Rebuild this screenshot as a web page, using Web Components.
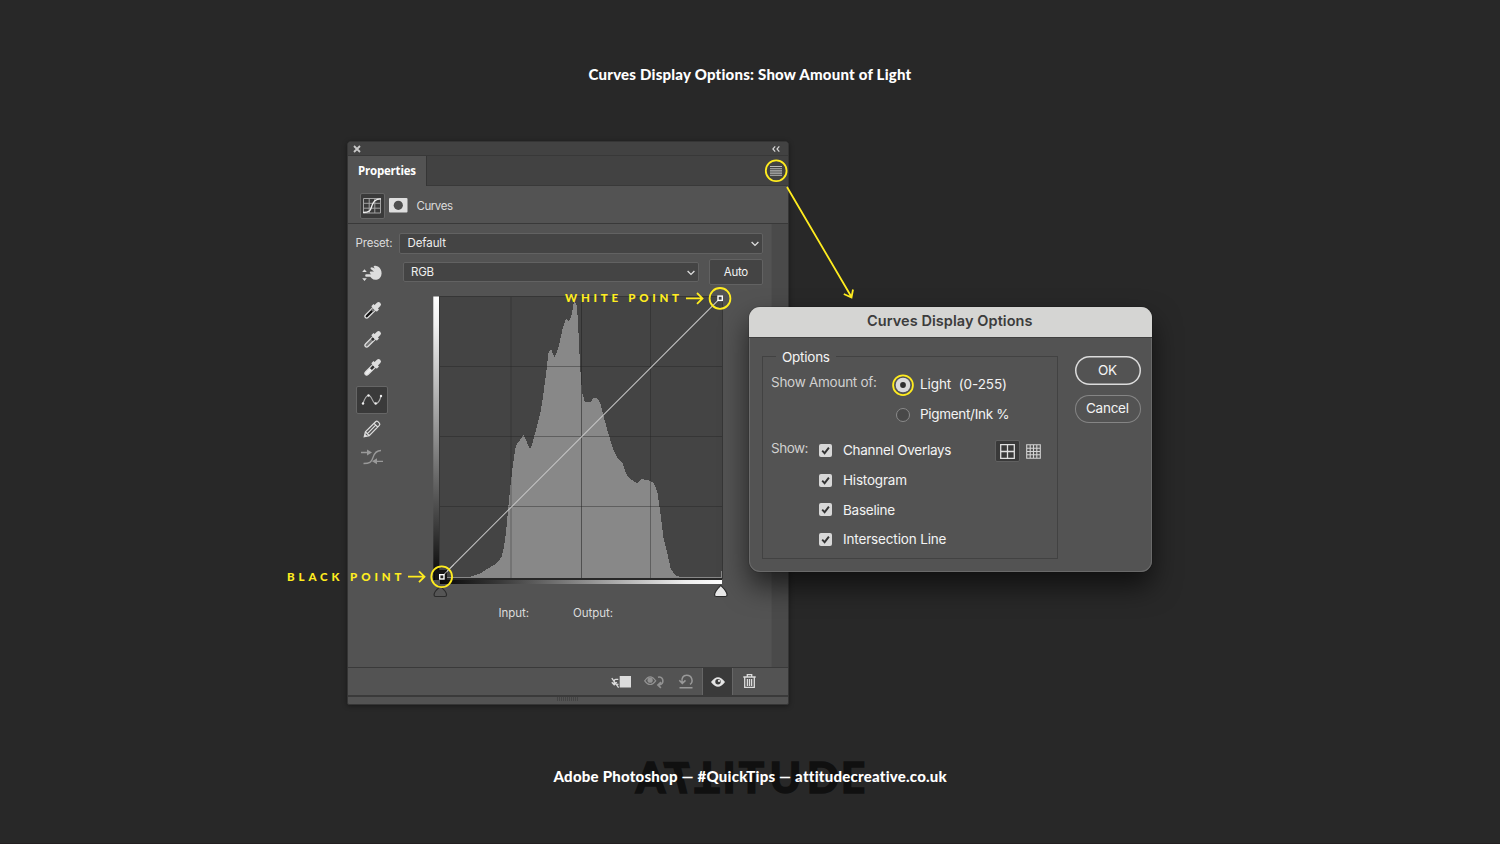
<!DOCTYPE html>
<html lang="en">
<head>
<meta charset="utf-8">
<title>Curves Display Options</title>
<style>
html,body{margin:0;height:100%;background:#282828;overflow:hidden}
</style>
</head>
<body>
<quick-tip></quick-tip>
<script>
function define(name, html, ready) {
  const tpl = document.createElement('template');
  tpl.innerHTML = html;
  customElements.define(name, class extends HTMLElement {
    constructor() {
      super();
      this.attachShadow({ mode: 'open' }).append(tpl.content.cloneNode(true));
    }
    connectedCallback() { if (ready) ready.call(this, this.shadowRoot); }
  });
}

/* Text tracked to a given measure in pixels. */
define('fit-text', `<style>
:host{display:inline-block;white-space:pre;line-height:1.2;flex:none}
span{display:inline-block}
</style><span><slot></slot></span>`, function (root) {
  const s = root.querySelector('span'), w = +this.getAttribute('w');
  const n = this.textContent.length;
  if (n > 1) s.style.letterSpacing = (w - s.getBoundingClientRect().width) / (n - 1) + 'px';
  this.style.width = w + 'px';
});

const icons = {
  curves: ['0 0 18 16', '<path d="M.5.5h17v14.500h-17zM.5 5.300h17M.5 10.200h17M6.200.5v14.500M11.800.5v14.500" fill="none" stroke="#a2a2a2"/><path d="M0 14.500c8 0 7.500-3 9-7S12 .8 18 .8" fill="none" stroke="#eee" stroke-width="1.300"/>'],
  mask: ['0 0 19 15', '<rect width="18.500" height="14.500" rx="1" fill="#dedede"/><circle cx="9.300" cy="7.300" r="4.600" fill="#4e4e4e"/>'],
  hand: ['0 0 20 17', '<path d="M.2 8 2.500 5.300 4.800 8zM.2 14.300l2.300 2.600 2.300-2.600z" fill="#ddd"/><path d="M8.300 7.600 12 7.400 8.700 5Q7.900 3.200 9.800 3.200L13 4.500 11.600 3Q11.700 1.500 13.400 1.800L16 2.600Q19.600 5 19.600 9.400 19.200 14 15.500 15.500 12 16.600 9.600 14.200L8.300 12.700H3.700Q2.600 11.400 3.700 10.200H9.300L7.900 9.300Q7.500 8.200 8.300 7.600z" fill="#ddd"/>'],
  dropBlack: ['0 0 18 18', '<g transform="rotate(45 9 9)"><path d="M7.200 6v10.100q0 2.200 1.800 2.200t1.800-2.200V6z" fill="#111" stroke="#ddd" stroke-width="1.300"/><path d="M7.700 6.500h2.600V9H7.700z" fill="#777"/><path d="M6.600-.4Q6.600-2.600 9-2.600t2.400 2.200V3h1.500v3.100H5.100V3h1.500z" fill="#ddd"/></g>'],
  dropGray: ['0 0 18 18', '<g transform="rotate(45 9 9)"><path d="M7.200 6v10.100q0 2.200 1.800 2.200t1.800-2.200V6z" fill="#777" stroke="#ddd" stroke-width="1.300"/><path d="M7.700 6.500h2.600V9H7.700z" fill="#333"/><path d="M6.600-.4Q6.600-2.600 9-2.600t2.400 2.200V3h1.500v3.100H5.100V3h1.500z" fill="#ddd"/></g>'],
  dropWhite: ['0 0 18 18', '<g transform="rotate(45 9 9)"><path d="M7.200 6v10.100q0 2.200 1.800 2.200t1.800-2.200V6z" fill="#eee" stroke="#ddd" stroke-width="1.300"/><path d="M7.700 6.500h2.600v4H7.700z" fill="#333"/><path d="M6.600-.4Q6.600-2.600 9-2.600t2.400 2.200V3h1.500v3.100H5.100V3h1.500z" fill="#ddd"/></g>'],
  spline: ['0 0 22 14', '<path d="M2 10.500C3.500 6 5 2.500 7.500 2.500c4 0 3.500 8 7.200 8C17.500 10.500 19 7 20 3" fill="none" stroke="#b0b0b0" stroke-width="1.100"/><g fill="#f0f0f0"><circle cx="2" cy="10.500" r="1.200"/><circle cx="7.500" cy="2.500" r="1.200"/><circle cx="14.700" cy="10.500" r="1.200"/><circle cx="20" cy="3" r="1.200"/></g>'],
  pencil: ['0 0 18 18', '<path d="m1.200 16.800 1.200-5L12.600 1.700q1.200-1.100 2.300 0l1.400 1.400q1.100 1.100 0 2.300L6.200 15.600zM11 3.400 14.700 7M2.600 12l3.500 3.500M4.200 13.800l8.500-8.600" fill="none" stroke="#ddd" stroke-width="1.200"/><path d="m1 17 1-3.300 2.300 2.300z" fill="#ddd"/>'],
  smooth: ['0 0 22 16', '<path d="M2.500 14.500c6 0 8-1 9.500-6s3.500-7 8-7M0 3.500h7M14 12.300h8" fill="none" stroke="#999" stroke-width="1.300"/><path d="M6 .5 11 3.500 6 6.500zM16 9.300l-5 3 5 3z" fill="#999"/>'],
  clip: ['0 0 20 14', '<path d="M8.700 1H20v11.500H8.700z" fill="#dcdcdc"/><path d="M7.300 4.300H4.900q-1.700 0-1.700 2v3.400M.8 7.300l2.400 2.600 2.600-2.600M.8 3.200l6.800 9.400" fill="none" stroke="#dcdcdc" stroke-width="1.300"/><path d="M5.500 9.300h2" stroke="#dcdcdc" stroke-width="1.200"/>'],
  previous: ['0 0 21 15', '<path d="M.7 6.800q5.400-8 11 0-5.600 7.400-11 0z" fill="none" stroke="#929292" stroke-width="1.200"/><circle cx="6.100" cy="6.200" r="2.600" fill="#929292"/><path d="M14 3.200c5.500-1.500 7 6.500 1 7.800M17 8.200 13.900 11l3 2.800" fill="none" stroke="#929292" stroke-width="1.600"/>'],
  reset: ['0 0 14 15', '<path d="M3.300 8.700C2 4 4.200 1.300 7.700 1.300c5.500 0 7 6.700 3.300 9M.3 6.300l3 3.100 3.200-3M.5 13.700h13" fill="none" stroke="#999" stroke-width="1.500"/>'],
  eye: ['0 0 14 10', '<path d="M0 5q7-9.600 14 0-7 9.600-14 0z" fill="#e4e4e4"/><circle cx="7" cy="4.800" r="2.700" fill="#3d3d3d"/><circle cx="8" cy="3.900" r="1.100" fill="#e4e4e4"/>'],
  trash: ['0 0 13 15', '<path d="M.3 3h12.400M4.300 2.700V.7h4.400v2M1.700 3.500v9.800h9.600V3.500M4.400 5v7M6.500 5v7M8.600 5v7" fill="none" stroke="#ddd" stroke-width="1.300"/>'],
  menu: ['0 0 12 10', '<path d="M0 .5h12M0 2.700h12M0 4.900h12M0 7.100h12M0 9.300h12" stroke="#b8b8b8" stroke-width="1.100"/>'],
  collapse: ['0 0 8 6', '<path d="M3.200.3.900 3l2.300 2.700M7.300.3 5 3l2.300 2.700" fill="none" stroke="#d5d5d5" stroke-width="1.200"/>'],
  close: ['0 0 8 8', '<path d="m1 1 6 6M7 1 1 7" stroke="#c8c8c8" stroke-width="1.800"/>'],
  chevron: ['0 0 8 6', '<path d="m.6 1 3.400 3.400L7.400 1" fill="none" stroke="#dedede" stroke-width="1.300"/>'],
  grid4: ['0 0 15 15', '<path d="M.7.7h13.600v13.600H.7zM7.500.7v13.600M.7 7.500h13.600" fill="none" stroke="#dfdfdf" stroke-width="1.300"/>'],
  grid10: ['0 0 15 15', '<path d="M.7.7h13.600v13.600H.7zM4.200.7v13.600M7.500.7v13.600M10.800.7v13.600M.7 4.200h13.600M.7 7.500h13.600M.7 10.800h13.600" fill="none" stroke="#d4d4d4" stroke-width="1.100"/>']
};
define('ui-icon', `<style>:host{display:block;flex:none;line-height:0}svg{display:block;overflow:visible}</style><svg></svg>`, function (root) {
  const [box, art] = icons[this.getAttribute('name')], v = box.split(' ');
  const svg = root.querySelector('svg');
  svg.setAttribute('viewBox', box);
  svg.setAttribute('width', v[2]);
  svg.setAttribute('height', v[3]);
  svg.innerHTML = art;
});

define('select-box', `<style>
:host{display:flex;align-items:center;justify-content:space-between;box-sizing:border-box;height:20.500px;padding:0 3px 0 7.500px;background:#444;border:1px solid #626262;border-radius:2px;color:#eee}
ui-icon{margin-top:2px}
</style><slot></slot><ui-icon name="chevron"></ui-icon>`);

define('curve-graph', `<style>:host{display:block}svg{display:block;overflow:visible}</style>
<svg width="300" height="310" viewBox="430 290 300 310">
<defs>
<linearGradient id="v" x1="0" y1="0" x2="0" y2="1"><stop offset="0" stop-color="#fff"/><stop offset=".1" stop-color="#f0f0f0"/><stop offset=".5" stop-color="#8d8d8d"/><stop offset=".8" stop-color="#3e3e3e"/><stop offset="1" stop-color="#060606"/></linearGradient>
<linearGradient id="h"><stop offset="0" stop-color="#060606"/><stop offset=".2" stop-color="#363636"/><stop offset=".5" stop-color="#898989"/><stop offset=".87" stop-color="#eee"/><stop offset="1" stop-color="#fff"/></linearGradient>
</defs>
<rect x="439.500" y="296.500" width="283" height="282" fill="#444" stroke="#363636"/>
<path shape-rendering="crispEdges" fill="#888" d="M441 578V577H470L480 573.500 488.300 568.300 496.700 563.300 501.700 556.700 504 546.700 506 533 508.300 506.700 510.300 486.700 512.700 466.700 515 450 516.700 444 520 440 523.300 434.700 525.300 438 528.300 446 530.300 449 532.300 443.300 536 430 540.700 411.700 543.300 395 546.700 368.300 548.700 351.700 551 349 554.700 357.700 558.700 346.700 562.700 328.300 566 318.300 568.700 321 571.300 316.700 573.300 305 574.700 301 576.700 305 578 321.700 580 365 582 391.700 584.700 401.700 590.700 401.700 593.300 398.300 597.300 398.300 600 402.300 603.300 415 607.300 430 613.300 450 617.300 457.300 622.700 463.300 626.700 475 630.700 479.300 637.300 483.300 641.300 479 650 480.700 654 483.300 657.300 491.700 660 510 663.300 536.700 667.300 553.300 670.700 568.300 675 575 680 577H720.500V571H722V578z"/>
<path d="M511 297V578M650.500 297V578M440 366.500H722M440 436.500H722M440 506.500H722" stroke="#222" stroke-opacity=".4" fill="none"/>
<path d="M581.500 297V578" stroke="#222" stroke-opacity=".55" fill="none"/>
<rect x="433.300" y="296.500" width="5.700" height="283.500" fill="url(#v)"/>
<rect x="440" y="578" width="282" height="2" fill="#282828"/>
<rect x="440" y="580" width="282" height="4" fill="url(#h)"/>
<path d="M441.700 576.700 720 298.300" stroke="#c6c6c6" stroke-width="1.050"/>
<path d="M440.300 586.500c-3 2.500-6.200 5-6.200 8v.5q0 1.500 1.500 1.500h9.400q1.500 0 1.500-1.500v-.5c0-3-3.200-5.500-6.200-8z" fill="#555" stroke="#2b2b2b" stroke-width="1.200"/>
<path d="M720.800 585.300c-3 3-6.200 6.500-6.200 9.200v.5q0 1.500 1.500 1.500h9.400q1.500 0 1.500-1.500v-.5c0-2.700-3.200-6.200-6.200-9.200z" fill="#e8e8e8" stroke="#2b2b2b" stroke-width="1.200"/>
<rect x="435" y="570" width="12" height="10" fill="#151515"/><path d="m444 574.400 10-9.900" stroke="#c6c6c6"/>
<rect x="439.700" y="574.700" width="4.300" height="4.300" fill="#222" stroke="#fff" stroke-width="1.400"/>
<rect x="718" y="296.100" width="4.300" height="4.300" fill="#444" stroke="#fff" stroke-width="1.400"/>
</svg>`);

define('properties-panel', `<style>
:host{display:flex;flex-direction:column;box-sizing:border-box;width:442px;height:564px;background:#535353;border:1px solid #353535;border-radius:4px 4px 2px 2px;overflow:hidden;font:11.500px Inter,sans-serif;color:#dcdcdc;box-shadow:0 1px 5px #0006}
.bar{display:flex;justify-content:space-between;align-items:center;height:13px;padding:0 8px 0 5px;background:#424242;flex:none}
.tabs{display:flex;justify-content:space-between;align-items:center;box-sizing:border-box;height:31px;background:#424242;border-top:1px solid #383838;flex:none;padding-right:5px}
.tab{align-self:stretch;display:flex;align-items:center;padding:0 10px 1px;width:58px;background:#535353;border-right:1px solid #353535;font:700 11.500px "Open Sans",sans-serif;color:#fff}
.rest{flex:1;align-self:stretch;border-bottom:1px solid #393939}
.menu{align-self:stretch;display:flex;align-items:center;border-bottom:1px solid #393939;padding-right:6px;margin-right:-5px}
.kind{display:flex;align-items:center;height:35px;border-bottom:1px solid #393939;padding:2px 0 0 11.500px;flex:none}
.kind fit-text{padding-top:2.500px}
.on{display:flex;align-items:center;justify-content:center;background:#3a3a3a;border:1px solid #666;border-radius:2px;box-sizing:border-box}
.kind .on{width:25px;height:26px}.kind ui-icon[name=mask]{margin:0 8.500px 0 4.500px}
.body{flex:1;display:grid;grid-template-columns:1fr 17px;min-height:0}
.scroll{background:#4a4a4a;border-left:1px solid #4f4f4f}
.main{padding:9px 0 0 7.500px}
.row{display:flex;align-items:center}
.r2{height:27px;margin-top:5px}
.auto{display:flex;align-items:center;justify-content:center;box-sizing:border-box;width:54px;height:26px;margin-left:10px;border:1px solid #626262;border-radius:2px;background:#444;color:#f2f2f2}
.row fit-text{position:relative;top:1px}
.work{display:grid;grid-template-columns:74.500px 300px}
.tools{display:flex;flex-direction:column;align-items:center;width:33px;padding:11.500px 0 0;gap:.700px}
.tools>div{width:32px;height:28px;display:flex;align-items:center;justify-content:center}
.tools .on{height:28px;margin-top:3px}
curve-graph{margin-top:4.500px}
.io{display:flex;gap:44px;padding:7px 0 0 143px}
.foot{display:flex;align-items:center;justify-content:flex-end;height:27px;border-top:1px solid #3a3a3a;border-bottom:2px solid #3a3a3a;flex:none;padding-right:32px}
.foot .on{align-self:stretch;width:31px;border-width:0 1px;border-radius:0;margin:0 10px 0 9px}
.grip{height:7px;flex:none;display:flex;justify-content:center;align-items:flex-start}
.grip i{width:22px;height:4px;background:repeating-linear-gradient(90deg,#444 0 1px,transparent 1px 2px)}
</style>
<div class="bar"><ui-icon name="close"></ui-icon><ui-icon name="collapse"></ui-icon></div>
<div class="tabs"><div class="tab"><fit-text w="58">Properties</fit-text></div><div class="rest"></div><div class="menu"><ui-icon name="menu"></ui-icon></div></div>
<div class="kind"><div class="on"><ui-icon name="curves"></ui-icon></div><ui-icon name="mask"></ui-icon><fit-text w="36.500">Curves</fit-text></div>
<div class="body"><div class="main">
<div class="row"><fit-text w="37">Preset:</fit-text><select-box style="width:363.500px;margin-left:6.500px"><fit-text w="38.500">Default</fit-text></select-box></div>
<div class="row r2"><ui-icon name="hand" style="margin-left:6px"></ui-icon><select-box style="width:296.500px;margin-left:21px"><fit-text w="23">RGB</fit-text></select-box><div class="auto"><fit-text w="24.500">Auto</fit-text></div></div>
<div class="work"><div class="tools">
<div><ui-icon name="dropBlack"></ui-icon></div><div><ui-icon name="dropGray"></ui-icon></div><div><ui-icon name="dropWhite"></ui-icon></div>
<div class="on"><ui-icon name="spline"></ui-icon></div><div><ui-icon name="pencil"></ui-icon></div><div><ui-icon name="smooth"></ui-icon></div></div>
<curve-graph></curve-graph></div>
<div class="io"><fit-text w="30.500">Input:</fit-text><fit-text w="40">Output:</fit-text></div>
</div><div class="scroll"></div></div>
<div class="foot"><ui-icon name="clip"></ui-icon><ui-icon name="previous" style="margin-left:13px"></ui-icon><ui-icon name="reset" style="margin-left:14px"></ui-icon><div class="on"><ui-icon name="eye"></ui-icon></div><ui-icon name="trash"></ui-icon></div>
<div class="grip"><i></i></div>`);

define('check-row', `<style>
:host{display:flex;align-items:center;height:29.700px;color:#f3f3f3}
svg{display:block;margin-right:11.500px}
</style><svg width="13" height="13" viewBox="0 0 13 13"><rect width="13" height="13" rx="2" fill="#d8d8d8"/><path d="m3.200 6.700 2.400 2.500 4.300-5.500" fill="none" stroke="#333" stroke-width="1.900"/></svg><slot></slot>`);

define('radio-row', `<style>
:host{display:flex;align-items:center;height:29.700px;color:#f3f3f3}
svg{display:block;margin:1px 10.500px 0 0;overflow:visible}
.dot{display:none}
:host([checked]) .dot{display:inline}
</style><svg width="14" height="14" viewBox="0 0 14 14"><circle cx="7" cy="7" r="6.500" fill="#484848" stroke="#8a8a8a"/><g class="dot"><circle cx="7" cy="7" r="7.300" fill="#dadada"/><circle cx="7" cy="7" r="2.900" fill="#303030"/></g></svg><slot></slot>`);

define('pill-button', `<style>
:host{display:flex;align-items:center;justify-content:center;box-sizing:border-box;width:66px;height:28.500px;border-radius:15px;box-shadow:inset 0 0 0 1px #858585;color:#f3f3f3;padding-bottom:1px}
:host([primary]){box-shadow:inset 0 0 0 1.500px #dcdcdc}
</style><slot></slot>`);

define('options-dialog', `<style>
:host{display:flex;flex-direction:column;width:402.500px;height:265px;border-radius:11px;background:#535353;overflow:hidden;font:13.500px Inter,sans-serif;color:#d3d3d3;box-shadow:0 0 1px #000,inset 0 0 0 1px #6a6a6a,0 14px 28px #0009}
header{height:30px;display:flex;align-items:center;justify-content:center;background:#d5d5d3;border-bottom:1px solid #3f3f3f;color:#3c3c3c;font-weight:600;font-size:14.500px;flex:none;padding-right:1px}
header fit-text{margin-bottom:1px}
main{display:grid;grid-template-columns:296px 66px;column-gap:17px;padding:11px 0 0 12.500px}
fieldset{margin:0;padding:0;border:1px solid #424242;height:210px;min-width:0;box-sizing:border-box;color:#d0d0d0}
legend{margin-left:13.500px;padding:0 6px;color:#f3f3f3}
.amount,.show{display:flex}
.amount{padding:5px 0 0 8.500px}
.amount>fit-text{margin:4.500px 18.500px 0 0}
.show{padding:6.500px 0 0 8.500px}
.show>fit-text{margin:4px 10px 0 0}
.list{flex:1}
.grids{display:flex;align-items:center;margin:4.500px 15.500px 0 0;height:22px}
.g{width:25px;height:22px;background:#393939;border:1px solid #606060;border-radius:2px;box-sizing:border-box;display:flex;align-items:center;justify-content:center;margin-right:6.500px}
.buttons{display:flex;flex-direction:column;gap:10px;padding-top:7.500px}
</style>
<header><fit-text w="165.500">Curves Display Options</fit-text></header>
<main><fieldset><legend><fit-text w="48">Options</fit-text></legend>
<div class="amount"><fit-text w="106">Show Amount of:</fit-text><div><radio-row checked><fit-text w="87">Light  (0-255)</fit-text></radio-row><radio-row><fit-text w="89.500">Pigment/Ink %</fit-text></radio-row></div></div>
<div class="show"><fit-text w="37.500">Show:</fit-text><div class="list"><check-row><fit-text w="108.500">Channel Overlays</fit-text></check-row><check-row><fit-text w="64">Histogram</fit-text></check-row><check-row><fit-text w="52">Baseline</fit-text></check-row><check-row><fit-text w="103.500">Intersection Line</fit-text></check-row></div>
<div class="grids"><div class="g"><ui-icon name="grid4"></ui-icon></div><ui-icon name="grid10"></ui-icon></div></div>
</fieldset>
<div class="buttons"><pill-button primary><fit-text w="19">OK</fit-text></pill-button><pill-button><fit-text w="43">Cancel</fit-text></pill-button></div></main>`);

define('brand-mark', `<style>
:host{display:flex;width:230px;height:31px;color:#101010;font:900 42px/31px Lato,sans-serif}
span{flex:none;text-align:center;-webkit-text-stroke:1.500px #101010}
</style><span style="width:31px">A</span><span style="width:27px;transform:skewX(14deg)">T</span><span style="width:28px;transform:rotate(180deg)">T</span><span style="width:16px">I</span><span style="width:29px">T</span><span style="width:39px">U</span><span style="width:36px">D</span><span style="width:24px">E</span>`);

define('quick-tip', `<style>
:host{display:block;position:relative;width:1500px;height:844px;background:#282828;overflow:hidden;-webkit-font-smoothing:antialiased}
.line{position:absolute;left:0;right:0;text-align:center;color:#fff;font:900 15px Lato,sans-serif}
properties-panel,options-dialog,brand-mark,.note,.marks{position:absolute}
.note{color:#ffec1f;font:900 11.500px Lato,sans-serif}
.base{position:absolute;left:0;right:0;bottom:0;height:1px;background:#231f20}
.marks{left:0;top:0}
</style>
<div class="line" style="top:65px"><fit-text w="323">Curves Display Options: Show Amount of Light</fit-text></div>
<properties-panel style="left:347px;top:141px"></properties-panel>
<options-dialog style="left:749px;top:306.500px"></options-dialog>
<fit-text class="note" w="114" style="left:565px;top:291px">WHITE POINT</fit-text>
<fit-text class="note" w="114.500" style="left:287px;top:569.500px">BLACK POINT</fit-text>
<svg class="marks" width="1500" height="844" fill="none" stroke="#ffec1f" stroke-width="1.800">
<circle cx="776.200" cy="170.700" r="10.400"/><circle cx="720" cy="298.400" r="10.400"/><circle cx="441.700" cy="576.700" r="10.400"/><circle cx="903" cy="385.200" r="9.900"/>
<path d="M787 187 851.500 297M843.800 294 851.500 297.500 853 289.500M686 298.400H702.500M697 293l5.500 5.400-5.500 5.400M408 576.700H424.500M419 571.300l5.500 5.400-5.500 5.400"/></svg>
<brand-mark style="left:635px;top:762px"></brand-mark>
<div class="line" style="top:767px"><fit-text w="393">Adobe Photoshop — #QuickTips — attitudecreative.co.uk</fit-text></div>
<div class="base"></div>`);
</script>
</body>
</html>
